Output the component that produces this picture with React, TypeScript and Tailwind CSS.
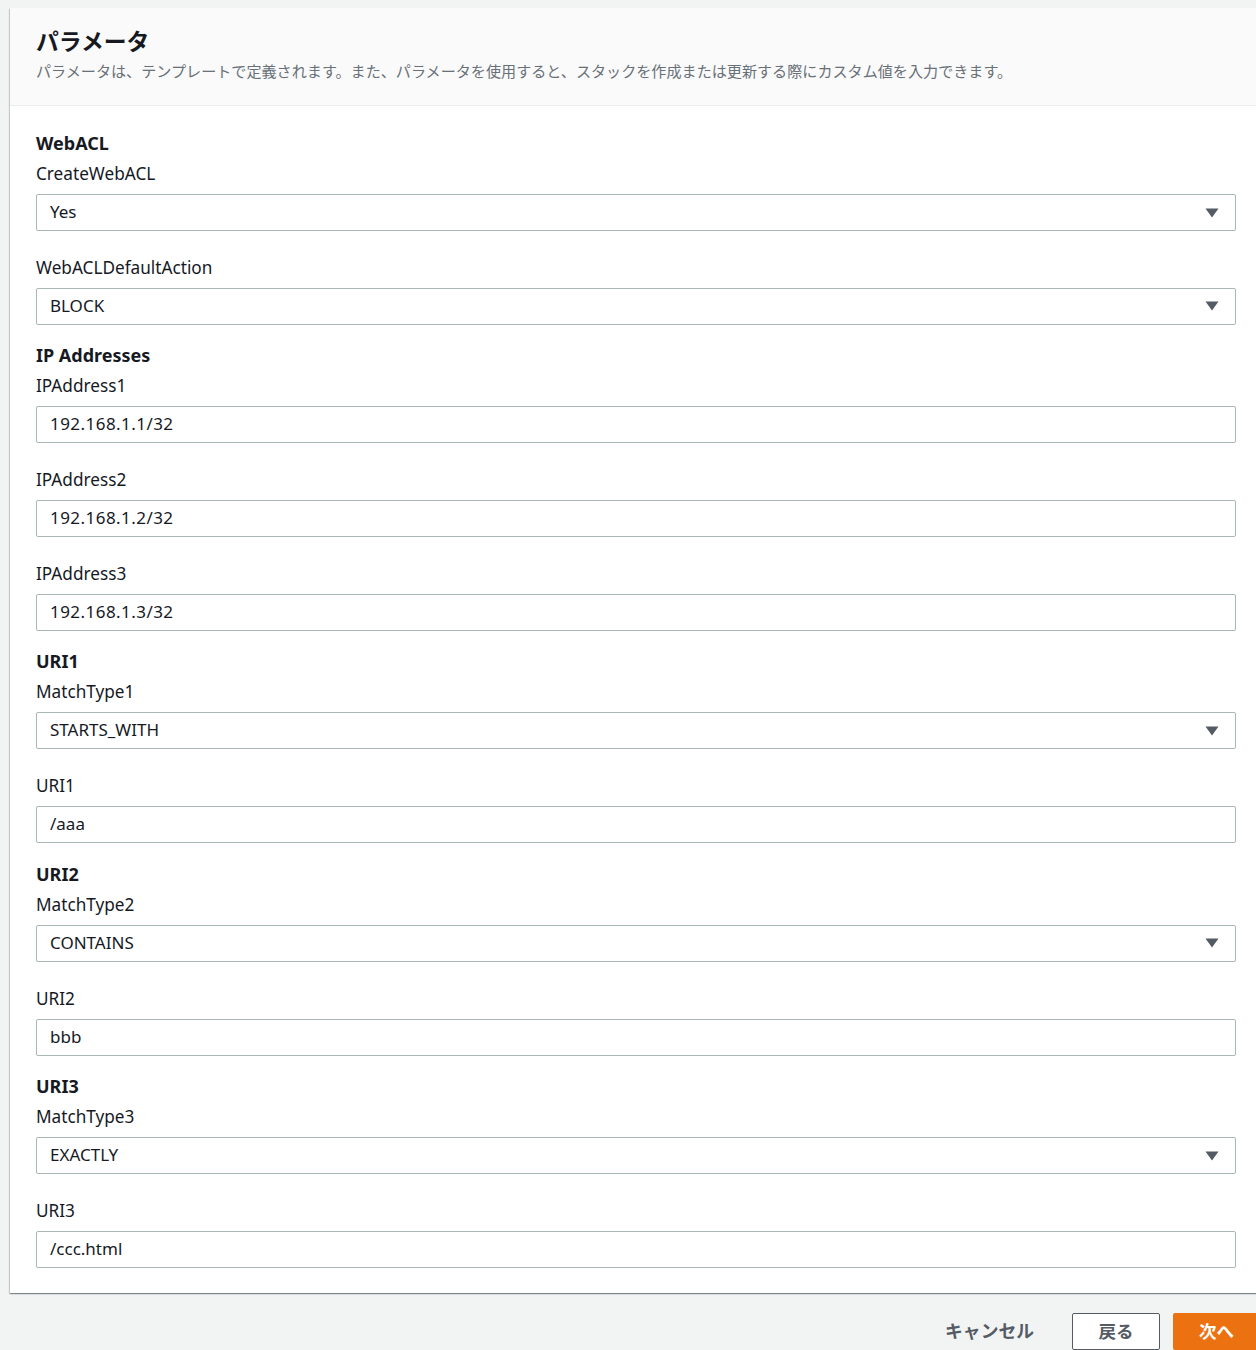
import React from "react";

const FONT = { fontFamily: '"Noto Sans", "Noto Sans CJK JP", sans-serif' };

function Arrow() {
  return (
    <svg width="14" height="10" viewBox="0 0 14 10" className="shrink-0">
      <path d="M0.5 0.5 H13.5 L7 9.5 Z" fill="#545b64" />
    </svg>
  );
}

function Field({ label, value, select, first, wide }: { label: string; value: string; select?: boolean; first?: boolean; wide?: boolean }) {
  return (
    <div className={first ? "mt-[8px]" : "mt-[25.67px]"}>
      <div className="text-[17.2px] leading-[22px] text-[#16191f]">{label}</div>
      <div className="mt-[9px] h-[37px] border border-[#aab7b8] rounded-[2px] bg-white flex items-center pl-[13px] pr-[16px]">
        <span className={(wide ? "text-[17px] tracking-[0.45px] " : "text-[17px] ") + "flex-1 text-[#16191f] leading-[22px] -mt-[1px]"}>{value}</span>
        {select && <Arrow />}
      </div>
    </div>
  );
}

function Section({ title, first, children }: { title: string; first?: boolean; children: React.ReactNode }) {
  return (
    <div className={first ? "" : "mt-[18.75px]"}>
      <div className="text-[18px] leading-[24px] font-bold text-[#16191f]">{title}</div>
      {children}
    </div>
  );
}

export default function App() {
  return (
    <div style={FONT} className="bg-[#f2f3f3] min-h-[1350px] h-[1350px] overflow-hidden pt-[8px] pl-[10px]">
      <div className="w-[1252px]">
        <div className="bg-white shadow-[0_1px_1px_0_rgba(0,28,36,0.3),1px_1px_1px_0_rgba(0,28,36,0.15),-1px_1px_1px_0_rgba(0,28,36,0.15)]">
          <div className="bg-[#fafafa] border-b border-[#eaeded] px-[26px] pt-[19px] pb-[23px]">
            <div className="text-[22.8px] leading-[30px] font-bold text-[#16191f]">パラメータ</div>
            <div className="mt-[3px] text-[15.1px] leading-[22px] text-[#687078] whitespace-nowrap">
              パラメータは、テンプレートで定義されます。また、パラメータを使用すると、スタックを作成または更新する際にカスタム値を入力できます。
            </div>
          </div>
          <div className="px-[26px] pt-[25px] pb-[25px]">
            <Section title="WebACL" first>
              <Field label="CreateWebACL" value="Yes" select first />
              <Field label="WebACLDefaultAction" value="BLOCK" select />
            </Section>
            <Section title="IP Addresses">
              <Field label="IPAddress1" value="192.168.1.1/32" first wide />
              <Field label="IPAddress2" value="192.168.1.2/32" wide />
              <Field label="IPAddress3" value="192.168.1.3/32" wide />
            </Section>
            <Section title="URI1">
              <Field label="MatchType1" value="STARTS_WITH" select first />
              <Field label="URI1" value="/aaa" />
            </Section>
            <Section title="URI2">
              <Field label="MatchType2" value="CONTAINS" select first />
              <Field label="URI2" value="bbb" />
            </Section>
            <Section title="URI3">
              <Field label="MatchType3" value="EXACTLY" select first />
              <Field label="URI3" value="/ccc.html" />
            </Section>
          </div>
        </div>
        <div className="mt-[20px] flex justify-end items-center pr-[2px]">
          <button className="h-[37px] px-[20px] text-[17.8px] font-bold text-[#545b64]">キャンセル</button>
          <button className="ml-[18px] h-[37px] w-[88px] border border-[#545b64] rounded-[2px] bg-white text-[17.5px] font-bold text-[#545b64]">戻る</button>
          <button className="ml-[13px] h-[37px] w-[87px] rounded-[2px] bg-[#ec7211] text-[17.5px] font-bold text-white">次へ</button>
        </div>
      </div>
    </div>
  );
}
